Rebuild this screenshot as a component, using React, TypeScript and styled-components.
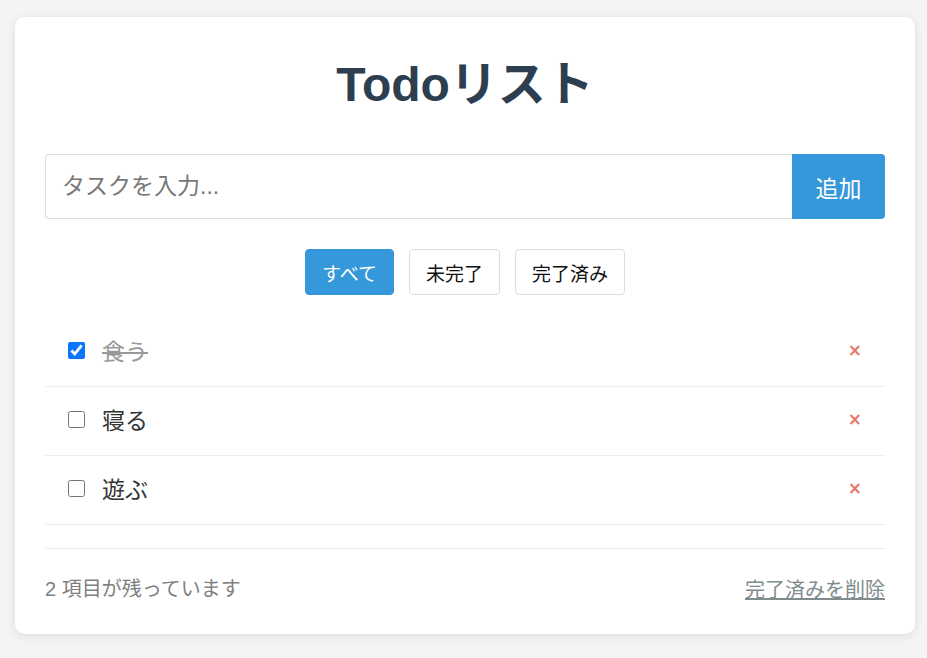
import React, { useState } from 'react';
import styled, { createGlobalStyle } from 'styled-components';

const GlobalStyle = createGlobalStyle`
  body {
    margin: 0;
    background: #f4f4f4;
    font-family: "Liberation Sans", "Noto Sans CJK JP", sans-serif;
  }
`;

const Page = styled.div`
  padding: 17px 12px 20px 15px;
`;

const Card = styled.div`
  width: 900px;
  box-sizing: border-box;
  background: #fff;
  border-radius: 10px;
  box-shadow: 0 2px 10px rgba(0, 0, 0, 0.1);
  padding: 30px 30px 31px;
`;

const Title = styled.h1`
  margin: 4px 0 35px;
  text-align: center;
  font-size: 48px;
  line-height: 68px;
  font-weight: 700;
  color: #2c3e50;
`;

const InputRow = styled.div`
  display: flex;
  height: 65px;
`;

const TaskInput = styled.input`
  flex: 1;
  min-width: 0;
  border: 1px solid #ddd;
  border-right: none;
  border-radius: 4px 0 0 4px;
  padding: 0 16px;
  font-family: inherit;
  font-size: 23px;
  color: #333;
  outline: none;

  &::placeholder {
    color: #777;
  }
`;

const AddButton = styled.button`
  width: 93px;
  border: none;
  border-radius: 0 4px 4px 0;
  background: #3498db;
  color: #fff;
  font-family: inherit;
  font-size: 23px;
  cursor: pointer;
`;

const Filters = styled.div`
  display: flex;
  justify-content: center;
  gap: 15px;
  margin: 30px 0 23px;
`;

const FilterButton = styled.button<{ $active: boolean }>`
  height: 46px;
  padding: 0 16px;
  border: 1px solid ${({ $active }) => ($active ? '#3498db' : '#ddd')};
  border-radius: 4px;
  background: ${({ $active }) => ($active ? '#3498db' : '#fff')};
  color: ${({ $active }) => ($active ? '#fff' : '#111')};
  font-family: inherit;
  font-size: 19px;
  cursor: pointer;
`;

const List = styled.ul`
  list-style: none;
  margin: 0 0 23px;
  padding: 0;
`;

const Item = styled.li`
  display: flex;
  align-items: center;
  box-sizing: border-box;
  height: 69px;
  padding: 0 19px 4px 23px;
  border-bottom: 1px solid #eee;
`;

const Check = styled.input`
  width: 17px;
  height: 17px;
  margin: 0 17px 0 0;
  accent-color: #0a75ff;
`;

const ItemText = styled.span<{ $done: boolean }>`
  flex: 1;
  font-size: 23px;
  color: ${({ $done }) => ($done ? '#999' : '#333')};
  text-decoration: ${({ $done }) => ($done ? 'line-through' : 'none')};
`;

const DeleteButton = styled.button`
  border: none;
  background: none;
  padding: 0 4px;
  color: #e8776b;
  font-family: "DejaVu Sans", sans-serif;
  font-size: 17px;
  font-weight: 700;
  cursor: pointer;
`;

const Footer = styled.div`
  display: flex;
  justify-content: space-between;
  align-items: center;
  border-top: 1px solid #eee;
  padding-top: 25px;
  font-size: 20px;
  line-height: 26px;
  color: #7f7f7f;
`;

const ClearLink = styled.button`
  border: none;
  background: none;
  padding: 0;
  font-family: inherit;
  font-size: 20px;
  color: #7f8c8d;
  text-decoration: underline;
  cursor: pointer;
`;

type Todo = { id: number; text: string; done: boolean };

export default function App() {
  const [todos, setTodos] = useState<Todo[]>([
    { id: 1, text: '食う', done: true },
    { id: 2, text: '寝る', done: false },
    { id: 3, text: '遊ぶ', done: false },
  ]);
  const [filter, setFilter] = useState<'all' | 'active' | 'done'>('all');
  const [draft, setDraft] = useState('');

  const addTodo = () => {
    if (!draft.trim()) return;
    setTodos(prev => [...prev, { id: Date.now(), text: draft.trim(), done: false }]);
    setDraft('');
  };

  const toggle = (id: number) =>
    setTodos(prev => prev.map(t => (t.id === id ? { ...t, done: !t.done } : t)));

  const remove = (id: number) => setTodos(prev => prev.filter(t => t.id !== id));

  const visible = todos.filter(t =>
    filter === 'all' ? true : filter === 'active' ? !t.done : t.done
  );
  const left = todos.filter(t => !t.done).length;

  return (
    <Page>
      <GlobalStyle />
      <Card>
        <Title>Todoリスト</Title>

        <InputRow>
          <TaskInput
            placeholder="タスクを入力..."
            value={draft}
            onChange={e => setDraft(e.target.value)}
            onKeyDown={e => e.key === 'Enter' && addTodo()}
          />
          <AddButton onClick={addTodo}>追加</AddButton>
        </InputRow>

        <Filters>
          <FilterButton $active={filter === 'all'} onClick={() => setFilter('all')}>すべて</FilterButton>
          <FilterButton $active={filter === 'active'} onClick={() => setFilter('active')}>未完了</FilterButton>
          <FilterButton $active={filter === 'done'} onClick={() => setFilter('done')}>完了済み</FilterButton>
        </Filters>

        <List>
          {visible.map(t => (
            <Item key={t.id}>
              <Check type="checkbox" checked={t.done} onChange={() => toggle(t.id)} />
              <ItemText $done={t.done}>{t.text}</ItemText>
              <DeleteButton onClick={() => remove(t.id)}>×</DeleteButton>
            </Item>
          ))}
        </List>

        <Footer>
          <span>{left} 項目が残っています</span>
          <ClearLink onClick={() => setTodos(prev => prev.filter(t => !t.done))}>完了済みを削除</ClearLink>
        </Footer>
      </Card>
    </Page>
  );
}
